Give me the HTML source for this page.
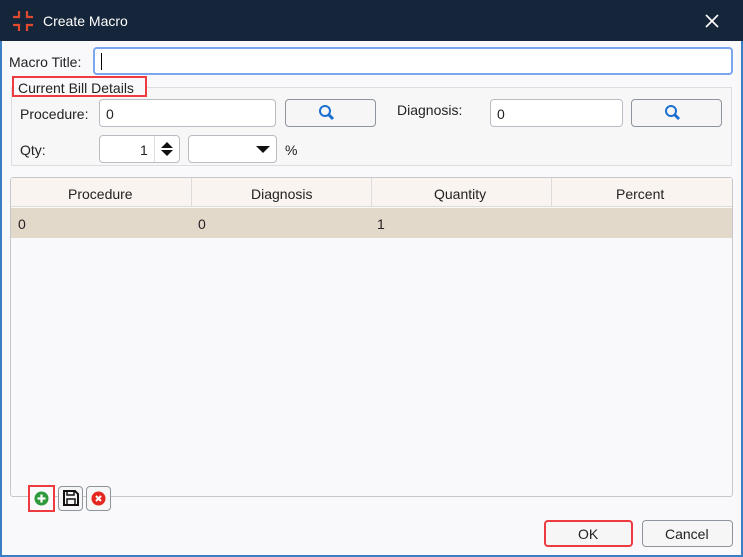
<!DOCTYPE html><html><head><style>
*{box-sizing:border-box}body{margin:0;width:743px;height:557px;font-family:"Liberation Sans",sans-serif;font-size:14px;color:#222;overflow:hidden}
.win{position:absolute;left:0;top:0;width:743px;height:557px;border:2px solid #3a7fc4;border-top:none;background:#f9f9fb}
.tb{position:absolute;left:0;top:0;width:743px;height:41px;background:#15263a;color:#fff;font-size:14px}
.a{position:absolute}
.inp{position:absolute;background:#fff;border:1px solid #b9bcc2;border-radius:4px}
.btn{position:absolute;background:#f6f6f7;border:1px solid #8e949c;border-radius:4px}
.red{position:absolute;border:2px solid #ee3b3f}
th{font-weight:normal}
</style></head><body>
<div class="win"></div>
<div class="tb">
<svg class="a" style="left:12px;top:11px" width="22" height="20" viewBox="0 0 22 20" fill="none" stroke="#e04a2e" stroke-width="2.2"><path d="M1 6H7V0M21 6H15V0M1 14H7V20M21 14H15V20"/></svg>
<span class="a" style="left:43px;top:13px">Create Macro</span>
<svg class="a" style="left:705px;top:14px" width="14" height="14" stroke="#fff" stroke-width="1.6"><path d="M1 1L13 13M13 1L1 13"/></svg>
</div>
<span class="a" style="left:9px;top:54px">Macro Title:</span>
<div class="a" style="left:93px;top:47px;width:640px;height:28px;border:2px solid #7aa6ee;border-radius:4px;background:#fff"></div>
<div class="a" style="left:101px;top:53px;width:1px;height:17px;background:#000"></div>
<div class="a" style="left:11px;top:87px;width:721px;height:79px;border:1px solid #dcdde0;background:#f7f7f8"></div>
<div class="red" style="left:12px;top:76px;width:135px;height:21px;background:#f9f9fb"></div>
<span class="a" style="left:18px;top:80px">Current Bill Details</span>
<span class="a" style="left:20px;top:106px">Procedure:</span>
<div class="inp" style="left:99px;top:99px;width:177px;height:28px"></div><span class="a" style="left:106px;top:106px">0</span>
<div class="btn" style="left:285px;top:99px;width:91px;height:28px"></div>
<svg class="a" style="left:318px;top:104px" width="17" height="17" stroke="#1a6fd0" stroke-width="2" fill="none"><circle cx="7" cy="7" r="5"/><path d="M10.5 10.5L15 15" stroke-width="3"/></svg>
<span class="a" style="left:397px;top:102px">Diagnosis:</span>
<div class="inp" style="left:490px;top:99px;width:133px;height:28px"></div><span class="a" style="left:497px;top:106px">0</span>
<div class="btn" style="left:631px;top:99px;width:91px;height:28px"></div>
<svg class="a" style="left:664px;top:104px" width="17" height="17" stroke="#1a6fd0" stroke-width="2" fill="none"><circle cx="7" cy="7" r="5"/><path d="M10.5 10.5L15 15" stroke-width="3"/></svg>
<span class="a" style="left:20px;top:142px">Qty:</span>
<div class="inp" style="left:99px;top:135px;width:81px;height:28px"></div>
<div class="a" style="left:154px;top:136px;width:1px;height:26px;background:#ddd"></div>
<span class="a" style="left:140px;top:142px">1</span>
<svg class="a" style="left:160px;top:141px" width="14" height="16" fill="#111"><path d="M1 7L7 1L13 7ZM1 9L7 15L13 9Z"/></svg>
<div class="inp" style="left:188px;top:135px;width:89px;height:28px"></div>
<svg class="a" style="left:256px;top:146px" width="14" height="8" fill="#111"><path d="M0 0H14L7 7Z"/></svg>
<span class="a" style="left:285px;top:142px">%</span>
<div class="a" style="left:10px;top:177px;width:723px;height:320px;border:1px solid #c5c7cb;border-radius:3px;background:#f9f9fb"></div>
<div class="a" style="left:11px;top:178px;width:721px;height:29px;background:#f9f4ef;border-bottom:1px solid #e0dcd6"></div>
<div class="a" style="left:191px;top:178px;width:1px;height:29px;background:#ddd"></div>
<div class="a" style="left:371px;top:178px;width:1px;height:29px;background:#ddd"></div>
<div class="a" style="left:551px;top:178px;width:1px;height:29px;background:#ddd"></div>
<span class="a" style="left:68px;top:186px">Procedure</span>
<span class="a" style="left:251px;top:186px">Diagnosis</span>
<span class="a" style="left:434px;top:186px">Quantity</span>
<span class="a" style="left:616px;top:186px">Percent</span>
<div class="a" style="left:11px;top:208px;width:721px;height:30px;background:#e3d9cb"></div>
<span class="a" style="left:18px;top:216px">0</span><span class="a" style="left:198px;top:216px">0</span><span class="a" style="left:377px;top:216px">1</span>
<div class="red" style="left:28px;top:485px;width:27px;height:27px;background:#f9f9fb"></div>
<svg class="a" style="left:34px;top:491px" width="15" height="15"><circle cx="7.5" cy="7.5" r="7" fill="#2e9a3c"/><path d="M7.5 3.5V11.5M3.5 7.5H11.5" stroke="#fff" stroke-width="2.2"/></svg>
<div class="btn" style="left:58px;top:486px;width:25px;height:25px"></div>
<svg class="a" style="left:63px;top:490px" width="16" height="16" fill="none" stroke="#111" stroke-width="2"><path d="M1 1H12L15 4V15H1Z"/><path d="M4 1V5H11V1M4 15V9H12V15" stroke-width="1.5"/></svg>
<div class="btn" style="left:86px;top:486px;width:25px;height:25px"></div>
<svg class="a" style="left:91px;top:491px" width="15" height="15"><circle cx="7.5" cy="7.5" r="7" fill="#e5261e"/><path d="M5 5L10 10M10 5L5 10" stroke="#fff" stroke-width="2"/></svg>
<div class="btn" style="left:544px;top:520px;width:89px;height:27px;border:2px solid #ee3b3f"></div>
<span class="a" style="left:578px;top:526px">OK</span>
<div class="btn" style="left:642px;top:520px;width:91px;height:27px"></div>
<span class="a" style="left:665px;top:526px">Cancel</span>
</body></html>
